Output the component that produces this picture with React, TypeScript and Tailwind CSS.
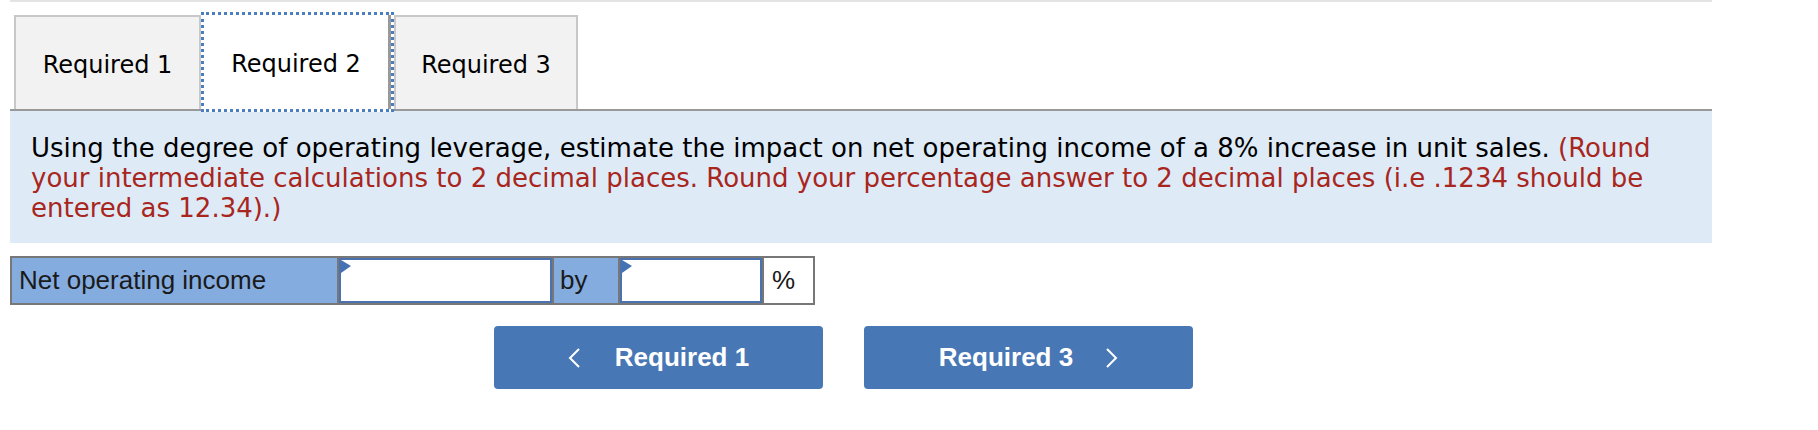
import React from 'react';

const verdana = { fontFamily: '"DejaVu Sans", Verdana, sans-serif' };
const arial = { fontFamily: '"Liberation Sans", Arial, sans-serif' };

function Flag() {
  return (
    <svg className="absolute left-0 top-0" width="10" height="13" viewBox="0 0 10 13">
      <polygon points="0,0 10,6 0,13" fill="#4472b3" />
    </svg>
  );
}

function Chevron({ dir }: { dir: 'left' | 'right' }) {
  return (
    <svg width="12" height="20" viewBox="0 0 12 20" fill="none">
      <path
        d={dir === 'left' ? 'M11 1 L2 10 L11 19' : 'M1 1 L10 10 L1 19'}
        stroke="#ffffff"
        strokeWidth="2"
      />
    </svg>
  );
}

export default function App() {
  return (
    <div className="w-[1818px] h-[430px] bg-white overflow-hidden">
      <div className="ml-[10px] w-[1702px] h-[2px] bg-[#e3e3e3]" />

      {/* tabs */}
      <div className="flex items-start ml-[14px] mt-[13px] h-[94px] text-[24px] text-black" style={verdana}>
        <div className="w-[187px] h-[94px] flex items-center justify-center pt-[4px] bg-[#f2f2f2] border-2 border-b-0 border-[#c8c8c8]">
          Required 1
        </div>
        <div className="relative z-10 w-[193px] h-[100px] -mt-[3px] -mb-[3px] border-[3px] border-dotted border-[#4a7ebf] bg-white">
          <div className="h-full flex items-center justify-center pt-[4px] border-r-[3px] border-[#999999]">
            Required 2
          </div>
        </div>
        <div className="w-[184px] h-[94px] flex items-center justify-center pt-[4px] bg-[#f2f2f2] border-2 border-b-0 border-[#c8c8c8]">
          Required 3
        </div>
      </div>

      {/* instruction box */}
      <div
        className="ml-[10px] w-[1702px] h-[134px] border-t-2 border-[#999999] bg-[#deebf7] pl-[21px] pt-[22px] text-[26px] leading-[30px] text-black"
        style={verdana}
      >
        Using the degree of operating leverage, estimate the impact on net operating income of a 8% increase in unit sales.{' '}
        <span className="text-[#a8261d]">
          (Round
          <br />
          your intermediate calculations to 2 decimal places. Round your percentage answer to 2 decimal places (i.e .1234 should be
          <br />
          entered as 12.34).)
        </span>
      </div>

      {/* answer row */}
      <div className="ml-[10px] mt-[13px] flex w-[805px] h-[49px] border-2 border-[#777777] text-[26px] text-[#1a1a1a]" style={arial}>
        <div className="w-[325px] h-full flex items-center pl-[7px] bg-[#84acdf]">Net operating income</div>
        <div className="w-[215px] h-full border-l-2 border-[#777777]">
          <div className="relative w-full h-full border-2 border-[#4a72b0] bg-white">
            <Flag />
          </div>
        </div>
        <div className="w-[66px] h-full flex items-center pl-[6px] border-l-2 border-[#777777] bg-[#84acdf]">by</div>
        <div className="w-[144px] h-full border-l-2 border-[#777777]">
          <div className="relative w-full h-full border-2 border-[#4a72b0] bg-white">
            <Flag />
          </div>
        </div>
        <div className="w-[51px] h-full flex items-center pl-[8px] border-l-2 border-[#777777] bg-white">%</div>
      </div>

      {/* nav buttons */}
      <div className="ml-[494px] mt-[21px] flex gap-[41px] text-[26px] font-bold text-white" style={arial}>
        <button className="w-[329px] h-[63px] rounded-[4px] bg-[#4877b5] flex items-center justify-center gap-[35px]">
          <Chevron dir="left" />
          <span>Required 1</span>
        </button>
        <button className="w-[329px] h-[63px] rounded-[4px] bg-[#4877b5] flex items-center justify-center gap-[33px]">
          <span>Required 3</span>
          <Chevron dir="right" />
        </button>
      </div>
    </div>
  );
}
